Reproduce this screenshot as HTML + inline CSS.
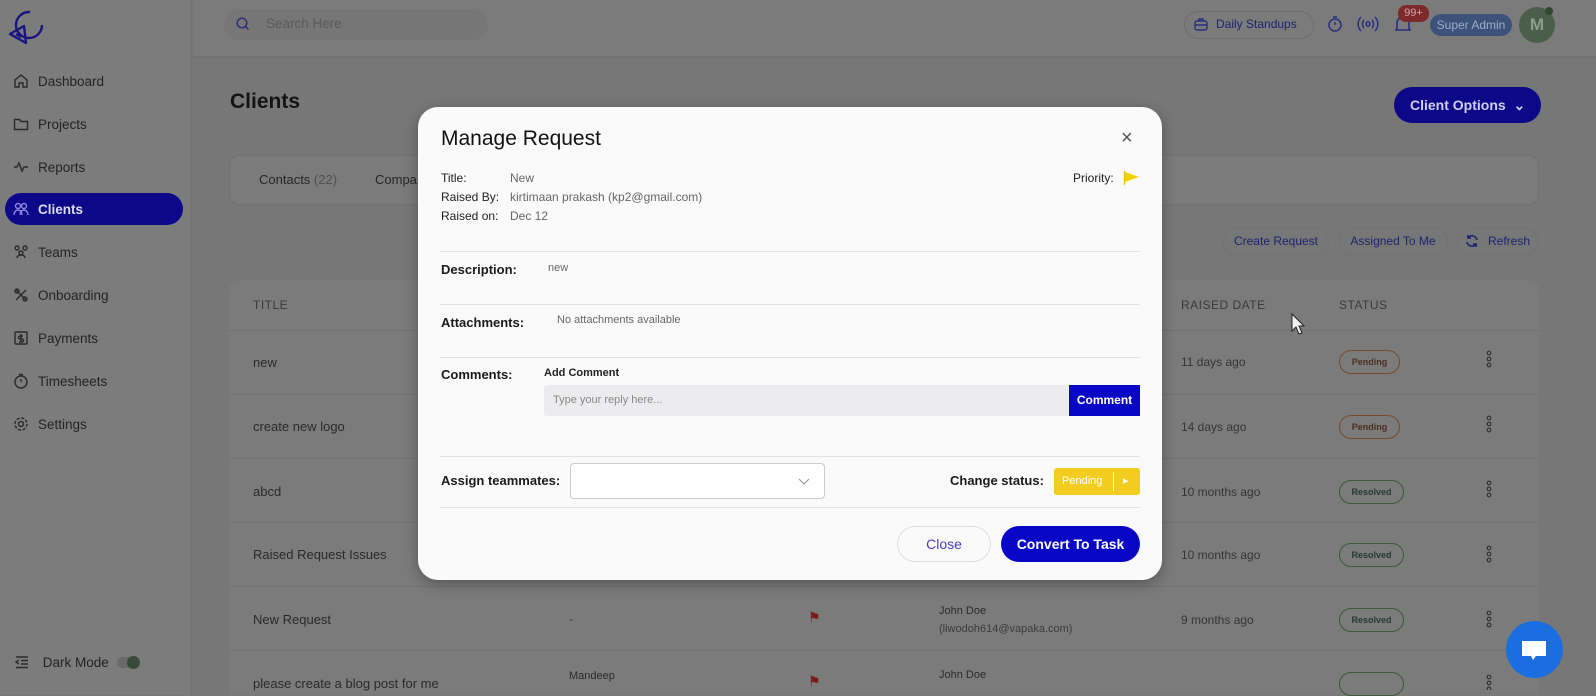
<!DOCTYPE html>
<html><head><meta charset="utf-8"><style>
*{box-sizing:border-box;margin:0;padding:0}
body{width:1596px;height:695px;overflow:hidden;background:#777;font-family:"Liberation Sans",sans-serif;position:relative;color:#222}
.abs{position:absolute}
.side{left:0;top:0;width:192px;height:695px;background:#7c7c7c;border-right:2px solid #747474}
.nav{left:13px;font-size:13.5px;color:#242424;display:flex;align-items:center;gap:9px}
.nav svg{width:16px;height:16px;stroke:#2a2a2a;fill:none;stroke-width:1.4}
.hdr{left:194px;top:0;width:1402px;height:58px;background:#7b7b7b;border-bottom:2px solid #727272}
.card{background:#7b7b7b;border-radius:10px}
.row{left:229px;width:1310px;height:64px;border-bottom:1px solid #6f7478;font-size:13px;color:#2a2a2a}
.pill{border-radius:14px;font-size:9px;font-weight:bold;text-align:center;line-height:22px;height:24px}
.modal{left:418px;top:107px;width:744px;height:473px;background:#fafafa;border-radius:20px;box-shadow:0 4px 14px rgba(0,0,0,.3);font-family:"Liberation Sans Narrow","Liberation Sans",sans-serif}
.m{position:absolute;font-size:11px;color:#222}
.mt{font-size:12px}
.hr{position:absolute;left:22px;right:22px;height:1px;background:#e2e2e2}
.lbl{font-size:13px;font-weight:bold;color:#1a1a1a}
.g{color:#666}
</style></head><body>
<div class="abs side"></div>
<svg class="abs" style="left:6px;top:6px" width="38" height="40" viewBox="0 0 38 40"><circle cx="23" cy="19" r="13" fill="none" stroke="#1a1480" stroke-width="2.4" stroke-dasharray="62 20"/><path d="M4 28 L18 20 L20 37 Z" fill="none" stroke="#1a1480" stroke-width="2.4" stroke-linejoin="round"/><path d="M10 28 L15 31" stroke="#1a1480" stroke-width="2.4"/></svg>
<div class="abs nav" style="top:73px"><svg viewBox="0 0 16 16"><path d="M2 14V7l6-5 6 5v7H10v-4H6v4z"/></svg>Dashboard</div>
<div class="abs nav" style="top:116px"><svg viewBox="0 0 16 16"><path d="M1.5 3.5h5l1.5 2h6.5v8h-13z"/></svg>Projects</div>
<div class="abs nav" style="top:159px"><svg viewBox="0 0 16 16"><path d="M1 8h3l2-4 3 8 2-4h4"/></svg>Reports</div>
<div class="abs" style="left:5px;top:193px;width:178px;height:32px;background:#0c0889;border-radius:16px"></div>
<div class="abs nav" style="top:201px;color:#dcdcf0;font-weight:bold"><svg viewBox="0 0 16 16" style="stroke:#8c88e0"><circle cx="5" cy="5" r="2.5"/><circle cx="11" cy="5" r="2.5"/><path d="M1 14c0-3 2-5 4-5s4 2 4 5M7 14c0-3 2-5 4-5s4 2 4 5"/></svg>Clients</div>
<div class="abs nav" style="top:244px"><svg viewBox="0 0 16 16"><circle cx="4" cy="4" r="2"/><circle cx="12" cy="4" r="2"/><circle cx="8" cy="9" r="2"/><path d="M4 14c0-2 2-3 4-3s4 1 4 3"/></svg>Teams</div>
<div class="abs nav" style="top:287px"><svg viewBox="0 0 16 16"><path d="M3 3l10 10M13 3L3 13"/><circle cx="4" cy="4" r="2"/><circle cx="12" cy="12" r="2"/></svg>Onboarding</div>
<div class="abs nav" style="top:330px"><svg viewBox="0 0 16 16"><rect x="2" y="2" width="12" height="12" rx="1"/><path d="M8 4v8M10 6H7a1.5 1.5 0 000 3h2a1.5 1.5 0 010 3H6"/></svg>Payments</div>
<div class="abs nav" style="top:373px"><svg viewBox="0 0 16 16"><circle cx="8" cy="9" r="6"/><path d="M8 6v3M6 1.5h4"/></svg>Timesheets</div>
<div class="abs nav" style="top:416px"><svg viewBox="0 0 16 16"><circle cx="8" cy="8" r="2.5"/><circle cx="8" cy="8" r="6" stroke-dasharray="3 1.7"/></svg>Settings</div>
<div class="abs nav" style="top:654px;left:14px"><svg viewBox="0 0 16 16"><path d="M2 3h12M7 6.5h7M7 10h7M2 13.5h12M5 6L2 8l3 2"/></svg>&nbsp;Dark Mode</div>
<div class="abs" style="left:117px;top:657px;width:22px;height:11px;border-radius:6px;background:#6a6a6a"></div>
<div class="abs" style="left:127px;top:656px;width:13px;height:13px;border-radius:7px;background:#3a4a3a"></div>

<div class="abs hdr"></div>
<div class="abs" style="left:224px;top:9px;width:264px;height:31px;border-radius:16px;background:#767676"></div>
<svg class="abs" style="left:236px;top:17px" width="14" height="14" viewBox="0 0 14 14"><circle cx="6" cy="6" r="4.8" fill="none" stroke="#2a2e80" stroke-width="1.5"/><path d="M9.5 9.5L12.5 12.5" stroke="#2a2e80" stroke-width="1.5"/></svg>
<div class="abs" style="left:266px;top:16px;font-size:13.5px;color:#5a5a5a">Search Here</div>
<div class="abs" style="left:1184px;top:11px;width:130px;height:28px;border-radius:14px;border:1px solid #6e6e6e"></div>
<svg class="abs" style="left:1193px;top:16px" width="16" height="16" viewBox="0 0 16 16" fill="none" stroke="#2a2e80" stroke-width="1.4"><rect x="2" y="5" width="12" height="9" rx="2"/><path d="M6 5V3h4v2M2 9h12"/></svg>
<div class="abs" style="left:1216px;top:17px;font-size:12px;color:#1f2370">Daily Standups</div>
<svg class="abs" style="left:1326px;top:15px" width="18" height="18" viewBox="0 0 18 18" fill="none" stroke="#2a2e80" stroke-width="1.5"><circle cx="9" cy="10" r="6"/><path d="M9 7v3M7 2h4"/></svg>
<svg class="abs" style="left:1357px;top:15px" width="22" height="18" viewBox="0 0 22 18" fill="none" stroke="#2a2e80" stroke-width="1.5"><circle cx="11" cy="9" r="2"/><path d="M7 5a6 6 0 000 8M15 5a6 6 0 010 8M4 2a10 10 0 000 14M18 2a10 10 0 010 14"/></svg>
<svg class="abs" style="left:1393px;top:14px" width="20" height="20" viewBox="0 0 20 20" fill="none" stroke="#2a2e80" stroke-width="1.6"><path d="M4 14V9a6 6 0 0112 0v5l1 2H3z"/></svg>
<div class="abs" style="left:1398px;top:5px;width:31px;height:17px;border-radius:8px;background:#7c2a2a;color:#d8a0a0;font-size:11px;text-align:center;line-height:17px">99+</div>
<div class="abs" style="left:1430px;top:14px;width:82px;height:22px;border-radius:11px;background:#3c527a;color:#9cadc8;font-size:12px;text-align:center;line-height:22px">Super Admin</div>
<div class="abs" style="left:1519px;top:7px;width:36px;height:36px;border-radius:18px;background:#4a5e4a;color:#8aa08a;font-size:17px;font-weight:bold;text-align:center;line-height:36px">M</div>
<div class="abs" style="left:1545px;top:7px;width:8px;height:8px;border-radius:4px;background:#2d4a2d"></div>

<div class="abs" style="left:230px;top:90px;font-size:21px;font-weight:bold;color:#141414">Clients</div>
<div class="abs" style="left:1394px;top:87px;width:147px;height:36px;border-radius:18px;background:#0c0889;color:#d0d0ee;font-size:14px;font-weight:bold;line-height:36px;padding-left:16px">Client Options &nbsp;⌄</div>
<div class="abs card" style="left:229px;top:155px;width:1310px;height:50px;border:1px solid #727272"></div>
<div class="abs" style="left:259px;top:172px;font-size:13px;color:#262626">Contacts <span style="color:#505050">(22)</span></div>
<div class="abs" style="left:375px;top:172px;font-size:13px;color:#262626">Compa</div>
<div class="abs" style="left:1223px;top:228px;width:106px;height:27px;border-radius:14px;border:1px solid #727272;font-size:12px;color:#1f2370;text-align:center;line-height:25px">Create Request</div>
<div class="abs" style="left:1338px;top:228px;width:110px;height:27px;border-radius:14px;border:1px solid #727272;font-size:12px;color:#1f2370;text-align:center;line-height:25px">Assigned To Me</div>
<div class="abs" style="left:1457px;top:228px;width:82px;height:27px;border-radius:14px;border:1px solid #727272;font-size:12px;color:#1f2370;line-height:25px;padding-left:30px">Refresh</div>
<svg class="abs" style="left:1465px;top:234px" width="14" height="14" viewBox="0 0 14 14" fill="none" stroke="#1f2370" stroke-width="1.6"><path d="M12 6a5 5 0 00-9-2M2 8a5 5 0 009 2M3 1v3h3M11 13v-3H8"/></svg>
<div class="abs" style="left:229px;top:280px;width:1310px;height:415px;background:#7b7b7b;border-radius:10px 10px 0 0"></div>
<div class="abs row" style="top:280px;height:51px;border-color:#707070"></div>
<div class="abs" style="left:253px;top:298px;font-size:12px;color:#3a3a3a;letter-spacing:.5px">TITLE</div>
<div class="abs" style="left:1181px;top:298px;font-size:12px;color:#3a3a3a;letter-spacing:.5px">RAISED DATE</div>
<div class="abs" style="left:1339px;top:298px;font-size:12px;color:#3a3a3a;letter-spacing:.5px">STATUS</div>

<div class="abs row" style="top:331px"></div><div class="abs row" style="top:395px"></div><div class="abs row" style="top:459px"></div><div class="abs row" style="top:523px"></div><div class="abs row" style="top:587px"></div>
<div class="abs" style="left:253px;top:355px;font-size:13px;color:#2a2a2a">new</div>
<div class="abs" style="left:253px;top:419px;font-size:13px;color:#2a2a2a">create new logo</div>
<div class="abs" style="left:253px;top:484px;font-size:13px;color:#2a2a2a">abcd</div>
<div class="abs" style="left:253px;top:547px;font-size:13px;color:#2a2a2a">Raised Request Issues</div>
<div class="abs" style="left:253px;top:612px;font-size:13px;color:#2a2a2a">New Request</div>
<div class="abs" style="left:253px;top:676px;font-size:13px;color:#2a2a2a">please create a blog post for me</div>
<div class="abs" style="left:569px;top:612px;font-size:12px;color:#3a3a3a">-</div>
<div class="abs" style="left:569px;top:670px;font-size:11px;color:#2a2a2a">Mandeep</div>
<div class="abs" style="left:808px;top:609px;color:#7a1a1a;font-size:14px">⚑</div>
<div class="abs" style="left:808px;top:673px;color:#7a1a1a;font-size:14px">⚑</div>
<div class="abs" style="left:939px;top:605px;font-size:11px;color:#2a2a2a">John Doe</div>
<div class="abs" style="left:939px;top:623px;font-size:11px;color:#3c3c3c">(liwodoh614@vapaka.com)</div>
<div class="abs" style="left:939px;top:669px;font-size:11px;color:#2a2a2a">John Doe</div>
<div class="abs" style="left:1181px;top:355px;font-size:12px;color:#353535">11 days ago</div>
<div class="abs" style="left:1181px;top:420px;font-size:12px;color:#353535">14 days ago</div>
<div class="abs" style="left:1181px;top:485px;font-size:12px;color:#353535">10 months ago</div>
<div class="abs" style="left:1181px;top:548px;font-size:12px;color:#353535">10 months ago</div>
<div class="abs" style="left:1181px;top:613px;font-size:12px;color:#353535">9 months ago</div>
<div class="abs pill" style="left:1339px;top:350px;width:61px;border:1.5px solid #7a4a2a;color:#4a3020">Pending</div>
<div class="abs pill" style="left:1339px;top:415px;width:61px;border:1.5px solid #7a4a2a;color:#4a3020">Pending</div>
<div class="abs pill" style="left:1339px;top:480px;width:65px;border:1.5px solid #3a5a3a;color:#263a30">Resolved</div>
<div class="abs pill" style="left:1339px;top:543px;width:65px;border:1.5px solid #3a5a3a;color:#263a30">Resolved</div>
<div class="abs pill" style="left:1339px;top:608px;width:65px;border:1.5px solid #3a5a3a;color:#263a30">Resolved</div>
<div class="abs pill" style="left:1339px;top:672px;width:65px;border:1.5px solid #3a5a3a;color:#263a30"></div>
<svg class="abs" style="left:1485px;top:350px" width="8" height="340" viewBox="0 0 8 340" fill="none" stroke="#333" stroke-width="1.2">
<g id="d"><circle cx="4" cy="3" r="1.8"/><circle cx="4" cy="9" r="1.8"/><circle cx="4" cy="15" r="1.8"/></g>
<use href="#d" y="65"/><use href="#d" y="130"/><use href="#d" y="195"/><use href="#d" y="260"/><use href="#d" y="324"/></svg>
<svg class="abs" style="left:1290px;top:312px" width="16" height="24" viewBox="0 0 16 24"><path d="M2 2v17l4-4 3 7 3-1-3-7h5z" fill="#f0f0f0" stroke="#222" stroke-width="1"/></svg>
<div class="abs" style="left:1506px;top:621px;width:57px;height:57px;border-radius:29px;background:#1a6ee0"></div>
<svg class="abs" style="left:1519px;top:636px" width="30" height="30" viewBox="0 0 30 30"><path d="M3 5h24v15H17l-3 4-2-4H3z" fill="#fff"/></svg>

<div class="abs modal">
<div class="m" style="left:23px;top:20px;font-size:21px;color:#111">Manage Request</div>
<div class="m" style="left:703px;top:20px;font-size:20px;color:#555">×</div>
<div class="m mt" style="left:23px;top:64px">Title:</div><div class="m g mt" style="left:92px;top:64px">New</div>
<div class="m mt" style="left:23px;top:83px">Raised By:</div><div class="m g mt" style="left:92px;top:83px">kirtimaan prakash (kp2@gmail.com)</div>
<div class="m mt" style="left:23px;top:102px">Raised on:</div><div class="m g mt" style="left:92px;top:102px">Dec 12</div>
<div class="m mt" style="left:655px;top:64px">Priority:</div>
<svg style="position:absolute;left:705px;top:63px" width="18" height="16" viewBox="0 0 18 16"><path d="M1.5 1v14" stroke="#e8c400" stroke-width="1.3"/><path d="M2 2l14 5-14 5z" fill="#f5d000"/></svg>
<div class="hr" style="top:144px"></div>
<div class="m lbl" style="left:23px;top:155px">Description:</div><div class="m g" style="left:130px;top:155px">new</div>
<div class="hr" style="top:197px"></div>
<div class="m lbl" style="left:23px;top:208px">Attachments:</div><div class="m g" style="left:139px;top:207px">No attachments available</div>
<div class="hr" style="top:250px"></div>
<div class="m lbl" style="left:23px;top:260px">Comments:</div>
<div class="m" style="left:126px;top:260px;font-weight:bold;color:#222">Add Comment</div>
<div class="m" style="left:126px;top:278px;width:525px;height:31px;background:#ececee;border-radius:3px 0 0 3px;padding:9px;color:#888">Type your reply here...</div>
<div class="m" style="left:651px;top:278px;width:71px;height:31px;background:#0a06c8;color:#fff;font-weight:bold;font-size:12px;text-align:center;line-height:31px">Comment</div>
<div class="hr" style="top:349px"></div>
<div class="m lbl" style="left:23px;top:366px">Assign teammates:</div>
<div class="m" style="left:152px;top:356px;width:255px;height:36px;border:1px solid #ccc;border-radius:4px;background:#fff"></div>
<svg style="position:absolute;left:380px;top:371px" width="12" height="8" viewBox="0 0 12 8"><path d="M1 1l5 5 5-5" fill="none" stroke="#999" stroke-width="1.2"/></svg>
<div class="m lbl" style="left:532px;top:366px">Change status:</div>
<div class="m" style="left:636px;top:361px;width:86px;height:27px;background:#f2cc1e;border-radius:3px;color:#fff;font-size:11px;line-height:27px;padding-left:8px">Pending<span style="position:absolute;left:59px;top:4px;height:19px;border-left:1px solid #fff"></span><span style="position:absolute;left:69px">▸</span></div>
<div class="hr" style="top:400px"></div>
<div class="m" style="left:479px;top:419px;width:94px;height:36px;border:1px solid #ddd;border-radius:18px;color:#4a3ec0;font-size:14px;text-align:center;line-height:34px">Close</div>
<div class="m" style="left:583px;top:419px;width:139px;height:36px;background:#0a06c8;border-radius:18px;color:#fff;font-size:14px;font-weight:bold;text-align:center;line-height:36px">Convert To Task</div>
</div>
</body></html>
